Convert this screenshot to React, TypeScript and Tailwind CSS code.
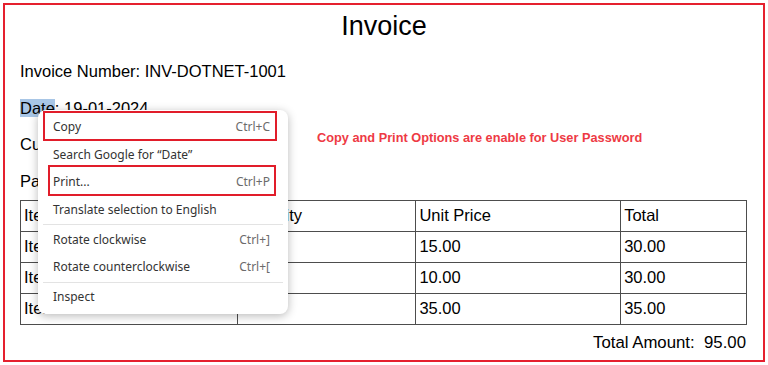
import React from "react";

const rows = [
  { item: "Item 1", qty: "2", price: "15.00", total: "30.00" },
  { item: "Item 2", qty: "3", price: "10.00", total: "30.00" },
  { item: "Item 3", qty: "1", price: "35.00", total: "35.00" },
];

type MenuEntry = { label: string; keys?: string } | "sep";

const menu: MenuEntry[] = [
  { label: "Copy", keys: "Ctrl+C" },
  { label: "Search Google for \u201cDate\u201d" },
  { label: "Print...", keys: "Ctrl+P" },
  { label: "Translate selection to English" },
  "sep",
  { label: "Rotate clockwise", keys: "Ctrl+]" },
  { label: "Rotate counterclockwise", keys: "Ctrl+[" },
  "sep",
  { label: "Inspect" },
];

function ContextMenu() {
  return (
    <div className="absolute left-[38px] top-[110px] w-[250px] rounded-[8px] bg-white py-[3px] shadow-[0_2px_10px_rgba(0,0,0,0.28)] font-['Noto_Sans',sans-serif] text-[12px]">
      {menu.map((m, i) =>
        m === "sep" ? (
          <div key={i} className="mx-[5px] my-[0.5px] h-px bg-[#e3e3e3]" />
        ) : (
          <div key={i} className="flex h-[27.7px] items-center justify-between pl-[15px] pr-[18px]">
            <span className="text-[#333333]">{m.label}</span>
            {m.keys && <span className="text-[#6b6b6b]">{m.keys}</span>}
          </div>
        )
      )}
      {/* annotation boxes */}
      <div className="absolute left-[5px] top-[1px] h-[30px] w-[234px] border-2 border-[#e11d2a]" />
      <div className="absolute left-[10px] top-[55px] h-[31px] w-[228px] border-2 border-[#e11d2a]" />
    </div>
  );
}

export default function App() {
  return (
    <div className="relative h-[365px] w-[768px] overflow-hidden bg-white p-[3px] font-['Liberation_Sans',Arial,sans-serif] text-black">
      <div className="h-full border-2 border-[#e5202e] px-[15px]">
        <h1 className="mt-[6px] text-center text-[27px] leading-[31px]">Invoice</h1>
        <div className="mt-[11px] text-[16.5px] leading-[36.7px]">
          <p>Invoice Number: INV-DOTNET-1001</p>
          <p>
            <span className="bg-[#a8c6e6]">Date</span>: 19-01-2024
          </p>
          <p>Customer: John Doe</p>
          <p>Payment: Paid</p>
        </div>
        <table className="w-[727px] border-collapse text-[16.5px] leading-[19px]">
          <thead>
            <tr>
              <td className="h-[31px] w-[217px] border border-[#4d4d4d] px-[3px]">Item</td>
              <td className="h-[31px] w-[179px] border border-[#4d4d4d] px-[3px]">Quantity</td>
              <td className="h-[31px] w-[205px] border border-[#4d4d4d] px-[3px]">Unit Price</td>
              <td className="h-[31px] w-[126px] border border-[#4d4d4d] px-[3px]">Total</td>
            </tr>
          </thead>
          <tbody>
            {rows.map((r) => (
              <tr key={r.item}>
                <td className="h-[31px] border border-[#4d4d4d] px-[3px]">{r.item}</td>
                <td className="h-[31px] border border-[#4d4d4d] px-[3px]">{r.qty}</td>
                <td className="h-[31px] border border-[#4d4d4d] px-[3px]">{r.price}</td>
                <td className="h-[31px] border border-[#4d4d4d] px-[3px]">{r.total}</td>
              </tr>
            ))}
          </tbody>
        </table>
        <p className="mt-[8px] w-[727px] pr-px text-right text-[16.8px] leading-[20px]">Total Amount:&nbsp; 95.00</p>
      </div>

      <p className="absolute left-[317px] top-[130px] text-[12.75px] font-bold leading-[16px] text-[#ee3a44]">
        Copy and Print Options are enable for User Password
      </p>

      <ContextMenu />
    </div>
  );
}
